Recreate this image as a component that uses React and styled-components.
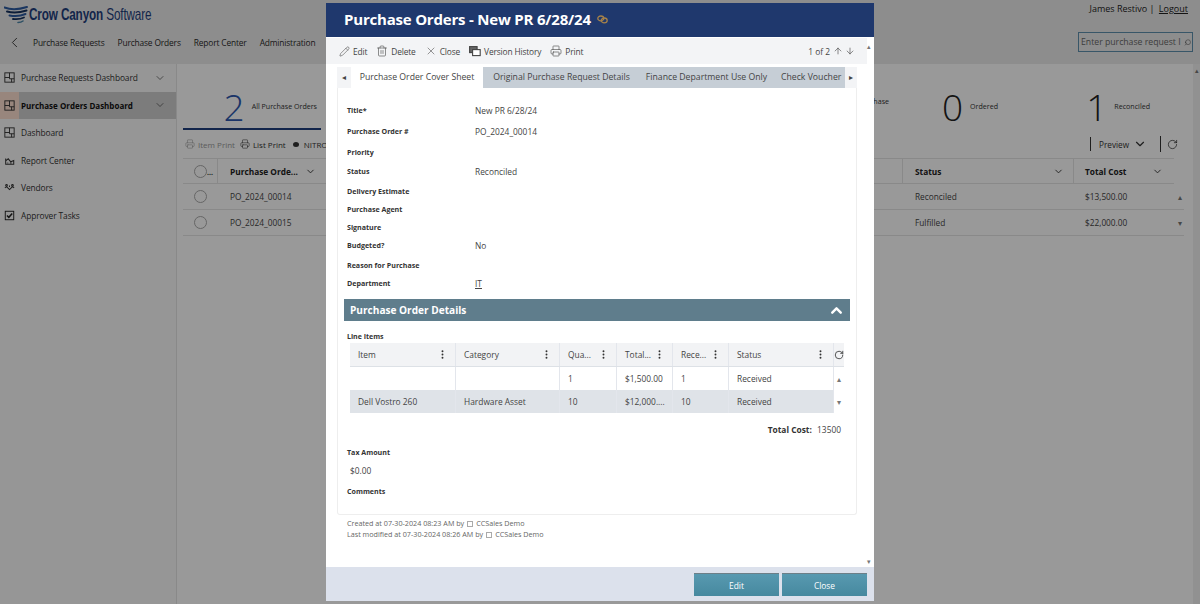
import styled, { createGlobalStyle } from 'styled-components';
import {
  Pencil,
  Trash2,
  X,
  Printer,
  ArrowUp,
  ArrowDown,
  RotateCw,
  Search,
  ChevronDown,
  ChevronLeft,
  ChevronUp,
  EllipsisVertical,
} from 'lucide-react';

const FONT = '"Open Sans", "Noto Sans", "Liberation Sans", sans-serif';

const GlobalStyle = createGlobalStyle`
  html, body {
    margin: 0;
    height: 100%;
    overflow: hidden;
    background: #fff;
    font-family: ${FONT};
    color: #333;
  }
  * {
    box-sizing: border-box;
  }
`;

const DashIcon = () => (
  <svg width='11' height='11' viewBox='0 0 13 13' fill='none' stroke='#333' strokeWidth='1.1'>
    <rect x='1' y='1' width='11' height='11' />
    <path d='M6.5 1v7M1 6.5h5.5M6.5 8H12M9 8v4' />
  </svg>
);

const ReportIcon = () => (
  <svg width='11' height='11' viewBox='0 0 13 13' fill='none' stroke='#333' strokeWidth='1.2'>
    <path d='M2 4v7h9.5V6.5L8 8 5 4.5 2 7' />
    <path d='M4 9.5h1M7 9.5h2' />
  </svg>
);

const VendorIcon = () => (
  <svg width='11' height='11' viewBox='0 0 13 13' fill='none' stroke='#333' strokeWidth='1.2'>
    <circle cx='3' cy='4' r='1' />
    <circle cx='10' cy='4' r='1' />
    <path d='M1 7l2-1.5L6.5 9 10 5.5 12 7M6.5 4v2' />
  </svg>
);

const TaskIcon = () => (
  <svg width='11' height='11' viewBox='0 0 13 13' fill='none' stroke='#222'>
    <rect x='1.5' y='1.5' width='10' height='10' strokeWidth='1.1' />
    <path d='M3.5 6.5l2.2 2.2 4-4.7' strokeWidth='1.8' />
  </svg>
);

const HistoryIcon = () => (
  <svg width='12' height='11' viewBox='0 0 12 11' fill='none' stroke='#444' strokeWidth='1.1'>
    <rect x='0.6' y='0.6' width='7.5' height='6' fill='#666' />
    <rect x='3.6' y='3.6' width='7.6' height='6' fill='#fff' />
  </svg>
);

const LinkIcon = () => (
  <svg width='11' height='9' viewBox='0 0 11 9' fill='none' stroke='#a5814a' strokeWidth='1.3'>
    <ellipse cx='3.8' cy='3.4' rx='3' ry='2.4' />
    <ellipse cx='7.2' cy='5.4' rx='3' ry='2.4' />
  </svg>
);

const Logo = () => (
  <svg width='24' height='20' viewBox='0 0 24 20' fill='none' strokeLinecap='round'>
    <path d='M0.5 2.5C7 5 15 4.5 23 2' stroke='#2c5aa0' strokeWidth='2' />
    <path d='M3 6.5C9 8 16 7.5 22.5 5.5' stroke='#17325f' strokeWidth='2' />
    <path d='M5.5 10.5C11 11.5 17 11 21.5 9' stroke='#2c5aa0' strokeWidth='2' />
    <path d='M9 14C13 14.5 17 14 20 12.5' stroke='#17325f' strokeWidth='1.8' />
    <path d='M14 17.5C16 17.5 18 16.8 19 16' stroke='#4d86a8' strokeWidth='1.6' />
  </svg>
);

const sideItems = [
  { label: 'Purchase Requests Dashboard', icon: <DashIcon />, arrow: true },
  { label: 'Purchase Orders Dashboard', icon: <DashIcon />, arrow: true, active: true },
  { label: 'Dashboard', icon: <DashIcon /> },
  { label: 'Report Center', icon: <ReportIcon /> },
  { label: 'Vendors', icon: <VendorIcon /> },
  { label: 'Approver Tasks', icon: <TaskIcon /> },
];

const formRows = [
  { label: 'Title*', value: 'New PR 6/28/24', gap: 0 },
  { label: 'Purchase Order #', value: 'PO_2024_00014', gap: 3 },
  { label: 'Priority', gap: 3 },
  { label: 'Status', value: 'Reconciled', gap: 1 },
  { label: 'Delivery Estimate', gap: 2 },
  { label: 'Purchase Agent', gap: 0 },
  { label: 'Signature', gap: 0 },
  { label: 'Budgeted?', value: 'No', gap: 0 },
  { label: 'Reason for Purchase', gap: 2 },
  { label: 'Department', value: 'IT', link: true, gap: 0 },
];

const lineColumns = [
  { label: 'Item', width: 106 },
  { label: 'Category', width: 104 },
  { label: 'Qua...', width: 57 },
  { label: 'Total...', width: 56 },
  { label: 'Rece...', width: 56 },
  { label: 'Status', width: 105 },
];

const lineRows = [
  ['', '', '1', '$1,500.00', '1', 'Received'],
  ['Dell Vostro 260', 'Hardware Asset', '10', '$12,000....', '10', 'Received'],
];

const App = () => {
  return (
    <Page>
      <GlobalStyle />
      <Header>
        <HeaderTop>
          <Brand>
            <Logo />
            <BrandName>
              <b>Crow Canyon</b> Software
            </BrandName>
          </Brand>
          <UserBox>
            James Restivo <Divider>|</Divider> <Logout>Logout</Logout>
          </UserBox>
        </HeaderTop>
        <HeaderNav>
          <ChevronLeft size={17} strokeWidth={1.3} color='#333' />
          <NavLinks>
            <NavLink>Purchase Requests</NavLink>
            <NavLink>Purchase Orders</NavLink>
            <NavLink>Report Center</NavLink>
            <NavLink>Administration</NavLink>
          </NavLinks>
          <SearchBox>
            <SearchText>Enter purchase request I</SearchText>
            <Search size={15} strokeWidth={1.3} color='#222' style={{ transform: 'scaleX(-1)' }} />
          </SearchBox>
        </HeaderNav>
      </Header>
      <Body>
        <Sidebar>
          {sideItems.map((item) => (
            <SideRow key={item.label} $active={item.active}>
              <SideIcon $active={item.active}>{item.icon}</SideIcon>
              <SideLabel $active={item.active}>{item.label}</SideLabel>
              {item.arrow && <ChevronDown size={12} strokeWidth={1.4} color='#444' />}
            </SideRow>
          ))}
        </Sidebar>
        <Main>
          <Stats>
            <Stat $width={138} $selected>
              <StatNum $blue>2</StatNum>
              <StatLabel>All Purchase Orders</StatLabel>
            </Stat>
            <StatHidden>
              <StatLabel>Purchase</StatLabel>
            </StatHidden>
            <Stat $width={96}>
              <StatNum>0</StatNum>
              <StatLabel>Ordered</StatLabel>
            </Stat>
            <Stat $width={96} $left={56}>
              <StatNum>1</StatNum>
              <StatLabel>Reconciled</StatLabel>
            </Stat>
          </Stats>
          <ListBar>
            <ListActions>
              <ListAction $muted>
                <Printer size={10} strokeWidth={1.3} />
                Item Print
              </ListAction>
              <ListAction>
                <Printer size={10} strokeWidth={1.3} />
                List Print
              </ListAction>
              <ListAction>
                <Dot />
                NITRO
              </ListAction>
            </ListActions>
            <ListTools>
              <Rule />
              <PreviewLabel>Preview</PreviewLabel>
              <ChevronDown size={14} strokeWidth={2} color='#333' />
              <Rule $tall />
              <RotateCw size={11} strokeWidth={1.5} color='#222' />
            </ListTools>
          </ListBar>
          <ListTable>
            <ListHeader>
              <CheckCell $head>
                <Radio />
                <Dots>...</Dots>
              </CheckCell>
              <PoCell $head>
                Purchase Orde...
                <ChevronDown size={11} strokeWidth={2} color='#333' />
              </PoCell>
              <StatusCell $head>
                Status
                <ChevronDown size={11} strokeWidth={2} color='#333' />
              </StatusCell>
              <CostCell $head>
                Total Cost
                <ChevronDown size={11} strokeWidth={2} color='#333' />
              </CostCell>
            </ListHeader>
            <ListRow>
              <CheckCell>
                <Radio />
              </CheckCell>
              <PoCell>PO_2024_00014</PoCell>
              <StatusCell>Reconciled</StatusCell>
              <CostCell>$13,500.00</CostCell>
              <RowArrow>▴</RowArrow>
            </ListRow>
            <ListRow>
              <CheckCell>
                <Radio />
              </CheckCell>
              <PoCell>PO_2024_00015</PoCell>
              <StatusCell>Fulfilled</StatusCell>
              <CostCell>$22,000.00</CostCell>
              <RowArrow>▾</RowArrow>
            </ListRow>
          </ListTable>
        </Main>
        <PageScroll>▴</PageScroll>
      </Body>

      <Overlay>
        <Modal>
          <TitleBar>
            <h1>Purchase Orders - New PR 6/28/24</h1>
            <LinkIcon />
          </TitleBar>
          <ModalScroll>
            <ModalInner>
              <Toolbar>
                <ToolButton>
                  <Pencil size={11} strokeWidth={1.2} />
                  Edit
                </ToolButton>
                <ToolButton>
                  <Trash2 size={12} strokeWidth={1.2} />
                  Delete
                </ToolButton>
                <ToolButton>
                  <X size={12} strokeWidth={1.1} />
                  Close
                </ToolButton>
                <ToolButton>
                  <HistoryIcon />
                  Version History
                </ToolButton>
                <ToolButton>
                  <Printer size={12} strokeWidth={1.2} />
                  Print
                </ToolButton>
                <Pager>
                  1 of 2
                  <ArrowUp size={10} strokeWidth={1.5} />
                  <ArrowDown size={10} strokeWidth={1.5} />
                </Pager>
              </Toolbar>
              <Tabs>
                <TabArrow>◂</TabArrow>
                <TabStrip>
                  <Tab $active $width={132}>Purchase Order Cover Sheet</Tab>
                  <Tab $width={157}>Original Purchase Request Details</Tab>
                  <Tab $width={133}>Finance Department Use Only</Tab>
                  <Tab $width={72} $clip>Check Voucher</Tab>
                </TabStrip>
                <TabArrow $narrow>▸</TabArrow>
              </Tabs>
              <Card>
                {formRows.map((row) => (
                  <FormRow key={row.label} $gap={row.gap}>
                    <FieldLabel>{row.label}</FieldLabel>
                    {row.value && <FieldValue $link={row.link}>{row.value}</FieldValue>}
                  </FormRow>
                ))}
                <SectionBar>
                  Purchase Order Details
                  <ChevronUp size={17} strokeWidth={3.4} color='#fff' />
                </SectionBar>
                <LineLabel>Line Items</LineLabel>
                <LineGrid>
                  <LineRow $head>
                    {lineColumns.map((col) => (
                      <LineCell key={col.label} $width={col.width} $head>
                        <span>{col.label}</span>
                        <EllipsisVertical size={11} strokeWidth={2.2} color='#333' />
                      </LineCell>
                    ))}
                    <LineTool>
                      <RotateCw size={10} strokeWidth={1.8} color='#222' />
                    </LineTool>
                  </LineRow>
                  {lineRows.map((cells, i) => (
                    <LineRow key={i} $shade={i === 1}>
                      {cells.map((text, j) => (
                        <LineCell key={j} $width={lineColumns[j].width}>
                          {text}
                        </LineCell>
                      ))}
                      <LineTool $arrow={i === 0 ? '▴' : '▾'} />
                    </LineRow>
                  ))}
                </LineGrid>
                <TotalRow>
                  <b>Total Cost:</b> 13500
                </TotalRow>
                <FieldLabel $block>Tax Amount</FieldLabel>
                <TaxValue>$0.00</TaxValue>
                <FieldLabel $block>Comments</FieldLabel>
              </Card>
              <Meta>
                <MetaLine>
                  Created at 07-30-2024 08:23 AM by <MetaBox /> CCSales Demo
                </MetaLine>
                <MetaLine>
                  Last modified at 07-30-2024 08:26 AM by <MetaBox /> CCSales Demo
                </MetaLine>
              </Meta>
            </ModalInner>
            <ScrollTrack>
              <span>▴</span>
              <span>▾</span>
            </ScrollTrack>
          </ModalScroll>
          <ModalFooter>
            <FooterButton>Edit</FooterButton>
            <FooterButton>Close</FooterButton>
          </ModalFooter>
        </Modal>
      </Overlay>
    </Page>
  );
};

export default App;

const Page = styled.div`
  position: relative;
  width: 1200px;
  height: 604px;
  overflow: hidden;
  display: flex;
  flex-direction: column;
`;

const Header = styled.div`
  height: 64px;
  background: #ececec;
  display: flex;
  flex-direction: column;
`;

const HeaderTop = styled.div`
  height: 31px;
  display: flex;
  justify-content: space-between;
  padding: 5px 12px 0 4px;
`;

const Brand = styled.div`
  display: flex;
  align-items: center;
  gap: 1px;
  height: 20px;
`;

const BrandName = styled.div`
  font-family: 'Liberation Sans', sans-serif;
  font-size: 17px;
  letter-spacing: -0.2px;
  color: #1f3f7d;
  transform: scaleX(0.69);
  transform-origin: left center;
  white-space: nowrap;
`;

const UserBox = styled.div`
  font-size: 9px;
  color: #222;
  margin-top: -3px;
`;

const Divider = styled.span`
  margin: 0 2px 0 0;
`;

const Logout = styled.span`
  text-decoration: underline;
`;

const HeaderNav = styled.div`
  display: flex;
  align-items: center;
  padding: 0 0 0 6px;
  height: 22px;
`;

const NavLinks = styled.div`
  display: flex;
  gap: 13px;
  margin-left: 10px;
  flex: 1;
`;

const NavLink = styled.span`
  font-size: 8.4px;
  letter-spacing: -0.15px;
  color: #2a2a2a;
  white-space: nowrap;
`;

const SearchBox = styled.div`
  width: 115px;
  height: 20px;
  border: 1px solid #5e90ad;
  display: flex;
  align-items: center;
  gap: 3px;
  padding: 0 1px 0 2px;
  margin-right: 7px;
`;

const SearchText = styled.span`
  flex: none;
  font-size: 8.7px;
  color: #666;
  white-space: nowrap;
`;

const Body = styled.div`
  flex: 1;
  display: flex;
  min-height: 0;
`;

const Sidebar = styled.div`
  width: 177px;
  background: #fbfbfb;
  border-right: 1px solid #e4e4e4;
  display: flex;
  flex-direction: column;
`;

const SideRow = styled.div`
  height: 27.5px;
  display: flex;
  align-items: center;
  padding-right: 10px;
  background: ${(p) => (p.$active ? '#cfcfcf' : 'transparent')};
`;

const SideIcon = styled.div`
  width: 19px;
  height: 100%;
  display: flex;
  align-items: center;
  justify-content: center;
  background: ${(p) => (p.$active ? '#fde0d0' : 'transparent')};
`;

const SideLabel = styled.span`
  flex: 1;
  margin-left: 2px;
  font-size: ${(p) => (p.$active ? 8 : 8.4)}px;
  letter-spacing: ${(p) => (p.$active ? 0 : -0.1)}px;
  font-weight: ${(p) => (p.$active ? 700 : 400)};
  color: ${(p) => (p.$active ? '#111' : '#333')};
  white-space: nowrap;
`;

const Main = styled.div`
  flex: 1;
  display: flex;
  flex-direction: column;
  padding: 0 0 0 6px;
  background: #fff;
`;

const Stats = styled.div`
  height: 66px;
  width: 971px;
  display: flex;
  align-items: flex-end;
`;

const Stat = styled.div`
  width: ${(p) => p.$width}px;
  height: 66px;
  margin-left: ${(p) => p.$left || 0}px;
  display: flex;
  align-items: center;
  justify-content: flex-end;
  gap: 7px;
  padding: 20px 4px 0 0;
  border-bottom: 2px solid ${(p) => (p.$selected ? '#1f3f7d' : 'transparent')};
`;

const StatHidden = styled.div`
  flex: 1;
  align-self: flex-start;
  display: flex;
  justify-content: flex-end;
  padding: 32px 0 0 0;
  margin-right: 17px;
`;

const StatNum = styled.span`
  font-size: 37px;
  font-weight: 300;
  line-height: 1;
  color: ${(p) => (p.$blue ? '#2d58ae' : '#222')};
`;

const StatLabel = styled.span`
  font-size: 7.1px;
  color: #333;
  white-space: nowrap;
`;

const ListBar = styled.div`
  width: 995px;
  height: 28px;
  display: flex;
  align-items: center;
  justify-content: space-between;
  padding-left: 2px;
`;

const ListActions = styled.div`
  display: flex;
  gap: 5px;
`;

const ListAction = styled.span`
  display: flex;
  align-items: center;
  gap: 3px;
  font-size: 8px;
  color: ${(p) => (p.$muted ? '#999' : '#333')};
`;

const Dot = styled.i`
  width: 6px;
  height: 5px;
  border-radius: 50%;
  background: #333;
  margin: 0 2px;
`;

const ListTools = styled.div`
  display: flex;
  align-items: center;
  gap: 4px;
`;

const Rule = styled.i`
  width: 1px;
  height: ${(p) => (p.$tall ? 16 : 14)}px;
  background: #333;
  margin: 0 ${(p) => (p.$tall ? 2 : 4)}px 0 ${(p) => (p.$tall ? 9 : 0)}px;
`;

const PreviewLabel = styled.span`
  font-size: 8.2px;
  color: #333;
`;

const ListTable = styled.div`
  width: 1001px;
  display: flex;
  flex-direction: column;
`;

const ListHeader = styled.div`
  width: 991px;
  height: 26px;
  display: flex;
  border-top: 1px solid #e4e4e4;
  border-bottom: 1px solid #e4e4e4;
  font-weight: 700;
  color: #222;
`;

const ListRow = styled.div`
  height: 26px;
  display: flex;
  border-bottom: 1px solid #e4e4e4;
  color: #444;
`;

const RowArrow = styled.span`
  width: 10px;
  margin-right: -1px;
  font-size: 8px;
  line-height: 26px;
  text-align: center;
  color: #777;
`;

const CheckCell = styled.div`
  width: 35px;
  flex: none;
  display: flex;
  align-items: center;
  padding-left: 11px;
  border-right: ${(p) => (p.$head ? '1px solid #e4e4e4' : 'none')};
`;

const Radio = styled.i`
  display: block;
  width: 13px;
  height: 13px;
  flex: none;
  border: 1px solid #aaa;
  border-radius: 50%;
`;

const Dots = styled.span`
  font-size: 7px;
  margin-top: 2px;
`;

const PoCell = styled.div`
  flex: 1;
  display: flex;
  align-items: center;
  gap: 7px;
  padding-left: 12px;
  font-size: 8.3px;
`;

const StatusCell = styled.div`
  width: 171px;
  flex: none;
  display: flex;
  align-items: center;
  justify-content: space-between;
  padding: 0 9px 0 12px;
  font-size: 8.3px;
  border-left: ${(p) => (p.$head ? '1px solid #e4e4e4' : 'none')};
`;

const CostCell = styled.div`
  width: 101px;
  flex: none;
  display: flex;
  align-items: center;
  justify-content: space-between;
  padding: 0 11px;
  font-size: 8.3px;
  border-left: ${(p) => (p.$head ? '1px solid #e4e4e4' : 'none')};
`;

const PageScroll = styled.div`
  position: absolute;
  top: 64px;
  right: 0;
  bottom: 0;
  width: 7px;
  background: #f2f2f2;
  color: #777;
  font-size: 7px;
  line-height: 14px;
  text-align: center;
`;

const Overlay = styled.div`
  position: absolute;
  inset: 0;
  background: rgba(0, 0, 0, 0.4);
  display: flex;
  justify-content: center;
  padding: 3px 0;
`;

const Modal = styled.div`
  width: 548px;
  height: 598px;
  background: #fff;
  display: flex;
  flex-direction: column;
`;

const TitleBar = styled.div`
  height: 34px;
  flex: none;
  background: #1f386d;
  display: flex;
  align-items: center;
  gap: 6px;
  padding: 0 0 2px 18px;

  h1 {
    margin: 0;
    font-size: 15px;
    letter-spacing: -0.2px;
    font-weight: 700;
    color: #fff;
    white-space: nowrap;
  }
`;

const ModalScroll = styled.div`
  flex: 1;
  display: flex;
  min-height: 0;
  padding-top: 1px;
`;

const ModalInner = styled.div`
  flex: 1;
  min-width: 0;
`;

const ScrollTrack = styled.div`
  width: 7px;
  display: flex;
  flex-direction: column;
  justify-content: space-between;
  font-size: 7px;
  color: #777;
  line-height: 8px;
  padding: 5px 0 1px;
`;

const Toolbar = styled.div`
  height: 26px;
  background: #f3f4f6;
  display: flex;
  align-items: center;
  gap: 9px;
  padding: 0 12px 0 13px;
`;

const ToolButton = styled.span`
  display: flex;
  align-items: center;
  gap: 3px;
  font-size: 8.4px;
  letter-spacing: -0.15px;
  color: #444;
  white-space: nowrap;
`;

const Pager = styled.span`
  margin-left: auto;
  display: flex;
  align-items: center;
  gap: 2px;
  font-size: 8.4px;
  color: #444;

  svg:first-of-type {
    margin-left: 1px;
  }
`;

const Tabs = styled.div`
  height: 21px;
  margin: 3px 10px 0 11px;
  display: flex;
  background: #f3f4f6;
`;

const TabArrow = styled.span`
  width: ${(p) => (p.$narrow ? 12 : 14)}px;
  flex: none;
  font-size: 8px;
  line-height: 20px;
  text-align: center;
  color: #444;
`;

const TabStrip = styled.div`
  flex: 1;
  min-width: 0;
  display: flex;
  overflow: hidden;
`;

const Tab = styled.span`
  width: ${(p) => p.$width}px;
  flex: none;
  overflow: hidden;
  font-size: 8.7px;
  line-height: 21px;
  padding-left: ${(p) => (p.$clip ? 8 : 0)}px;
  text-align: ${(p) => (p.$clip ? 'left' : 'center')};
  white-space: nowrap;
  color: #444;
  background: ${(p) => (p.$active ? '#fff' : '#c6ced6')};
`;

const Card = styled.div`
  height: 427px;
  margin: 0 10px 0 11px;
  padding: 13px 6px 0;
  border: 1px solid #eee;
  border-top: none;
  border-radius: 0 0 3px 3px;
`;

const FormRow = styled.div`
  height: 18px;
  margin-top: ${(p) => p.$gap}px;
  display: flex;
  align-items: center;
  padding-left: 3px;
`;

const FieldLabel = styled.span`
  display: ${(p) => (p.$block ? 'block' : 'inline')};
  width: 128px;
  flex: none;
  font-size: 7.1px;
  line-height: 18px;
  font-weight: 700;
  color: #333;
  padding-left: ${(p) => (p.$block ? 3 : 0)}px;
  white-space: nowrap;
`;

const FieldValue = styled.span`
  font-size: 8.4px;
  color: #444;
  text-decoration: ${(p) => (p.$link ? 'underline' : 'none')};
`;

const SectionBar = styled.div`
  height: 22px;
  margin-top: 7px;
  background: #5f7d8c;
  color: #fff;
  font-size: 10.1px;
  font-weight: 700;
  display: flex;
  align-items: center;
  justify-content: space-between;
  padding: 0 5px 0 6px;
`;

const LineLabel = styled.div`
  margin-top: 7px;
  padding-left: 3px;
  font-size: 7px;
  line-height: 18px;
  font-weight: 700;
  color: #333;
`;

const LineGrid = styled.div`
  margin: -3px 0 0 6px;
  width: 494px;
  display: flex;
  flex-direction: column;
`;

const LineRow = styled.div`
  height: ${(p) => (p.$head ? 24 : 23)}px;
  display: flex;
  background: ${(p) => (p.$head ? '#f2f3f5' : p.$shade ? '#dfe3e8' : '#fff')};
  border-bottom: ${(p) => (p.$head ? '1px solid #dde1e6' : 'none')};
`;

const LineCell = styled.div`
  width: ${(p) => p.$width}px;
  flex: none;
  display: flex;
  align-items: center;
  justify-content: space-between;
  padding: 0 7px 0 8px;
  font-size: 8.4px;
  color: #444;
  border-right: 1px solid #e3e6ec;
  white-space: nowrap;
`;

const LineTool = styled.div`
  flex: 1;
  display: flex;
  align-items: center;
  justify-content: center;
  background: ${(p) => (p.$arrow ? '#fff' : 'transparent')};
  &::before {
    content: '${(p) => p.$arrow || ''}';
    font-size: 8px;
    color: #777;
  }
`;

const TotalRow = styled.div`
  margin: 10px 0 6px;
  padding-right: 9px;
  text-align: right;
  font-size: 8.4px;
  line-height: 14px;
  color: #444;

  b {
    color: #333;
    margin-right: 3px;
  }
`;

const TaxValue = styled.div`
  margin: 1px 0 2px;
  padding-left: 6px;
  font-size: 8.4px;
  line-height: 18px;
  color: #444;
`;

const Meta = styled.div`
  padding: 3px 0 0 21px;
`;

const MetaLine = styled.div`
  display: flex;
  align-items: center;
  gap: 3px;
  font-size: 7.2px;
  line-height: 11px;
  color: #666;
`;

const MetaBox = styled.i`
  width: 6px;
  height: 6px;
  border: 1px solid #aaa;
`;

const ModalFooter = styled.div`
  height: 34px;
  flex: none;
  background: #dce1ec;
  display: flex;
  justify-content: flex-end;
  align-items: center;
  gap: 3px;
  padding-right: 7px;
`;

const FooterButton = styled.span`
  width: 85px;
  height: 23px;
  background: linear-gradient(#5899b0, #46899f);
  color: #fff;
  font-size: 8.4px;
  line-height: 23px;
  text-align: center;
  border-top: 1px solid #6d7f88;
`;
